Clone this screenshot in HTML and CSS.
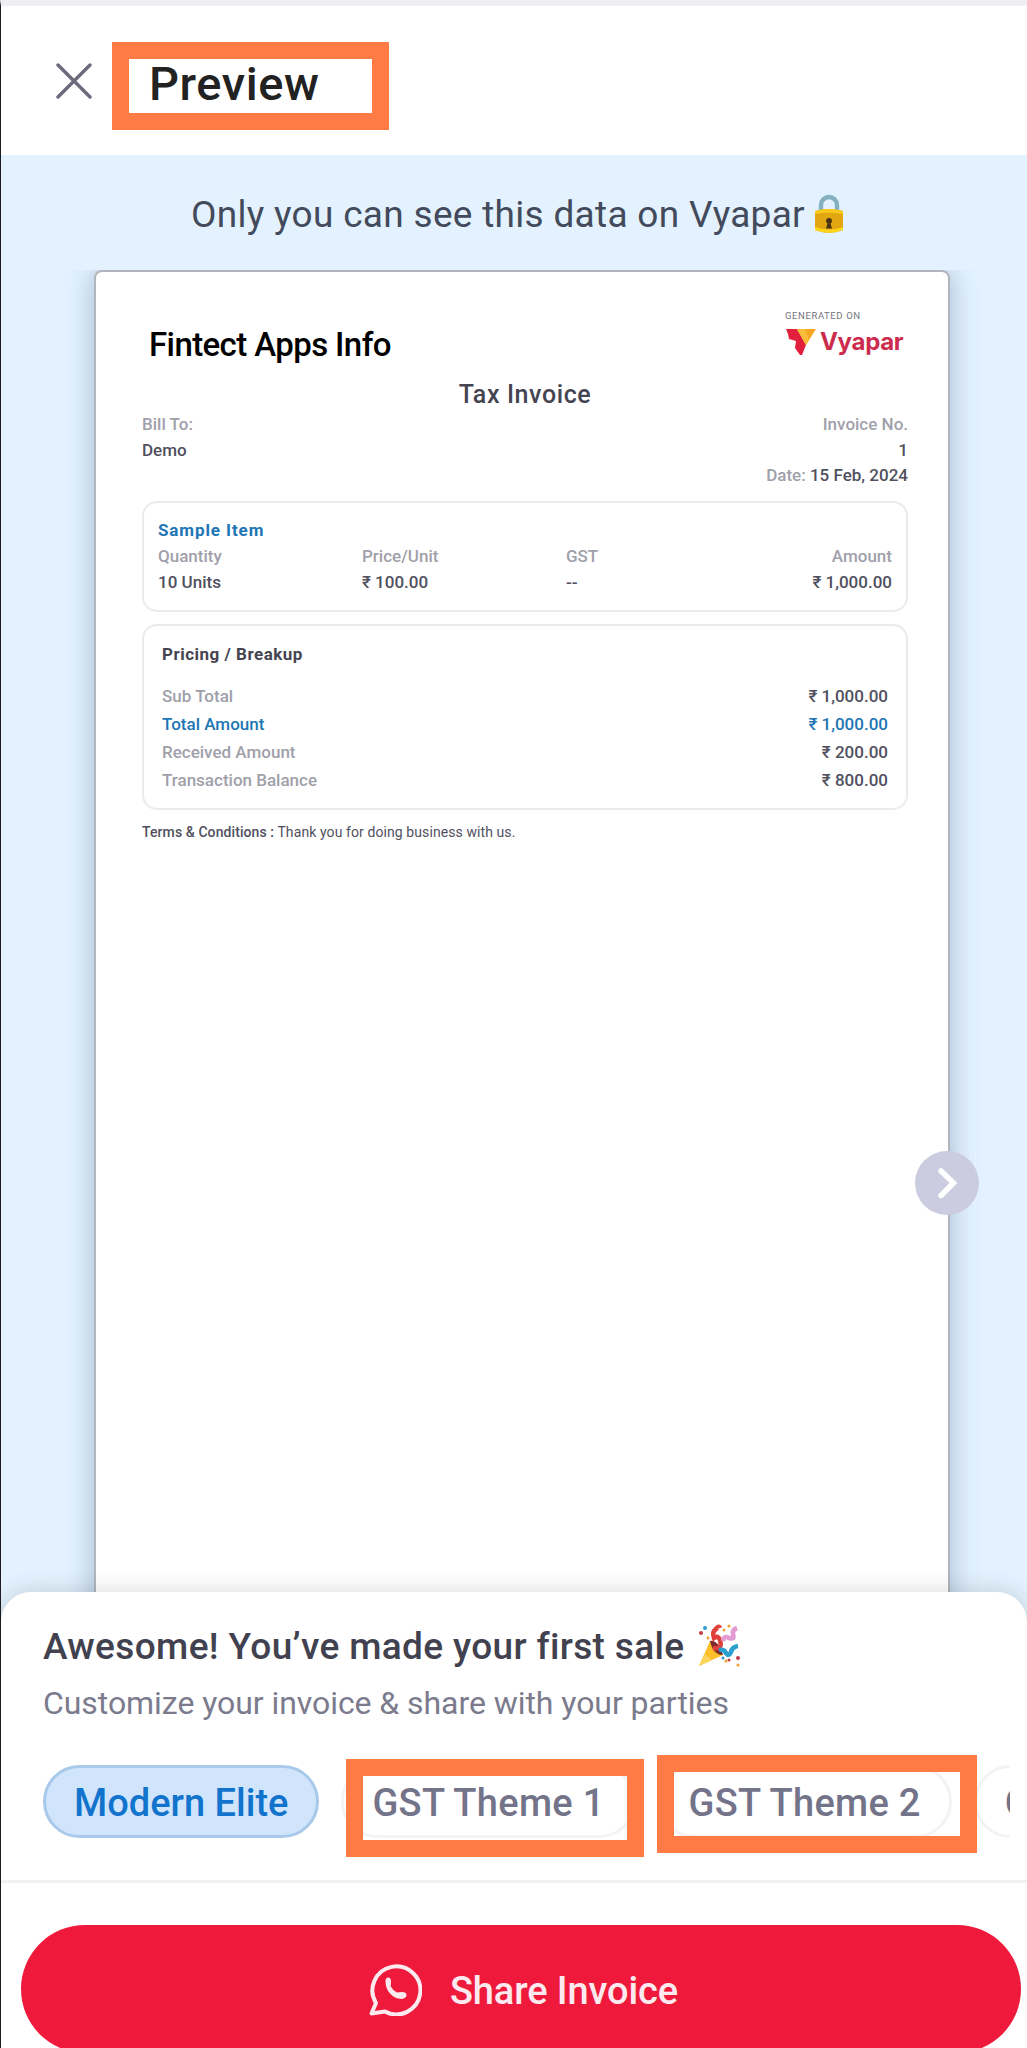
FILE: index.html
```html
<!doctype html>
<html lang="en">
<head>
    <meta charset="utf-8">
    <title>Preview</title>
    <link rel="stylesheet" href="styles.css">
</head>
<body>

<div class="screen">
    <header class="header">
        <svg class="close" viewBox="0 0 36 36">
            <path d="M2 2l32 32M34 2L2 34"/>
        </svg>
        <h1 class="title highlight">Preview</h1>
    </header>

    <main class="stage">
        <p class="notice">
            <span>Only you can see this data on Vyapar</span>
            <svg class="lock" viewBox="0 0 30 40">
                <path d="M7 20V11a8 8 0 0 1 16 0v9" fill="none" stroke="#84b1bf" stroke-width="4.4"/>
                <path d="M1 17q14-4 28 0v19q-14 6-28 0z" fill="#e2a610"/>
                <path d="M1 17q14-4 28 0v3q-14-3-28 0z" fill="#fbc91c"/>
                <path d="M1 33q14 5 28 0v3q-14 6-28 0z" fill="#fdd41c"/>
                <path d="M12 27a3 3 0 1 1 6 0q0 1.500-1.500 2.500l1.500 5h-6l1.500-5q-1.500-1-1.500-2.500z" fill="#4b3413"/>
            </svg>
        </p>

        <article class="invoice">
            <div class="brand">
                <h2 class="company">Fintect Apps Info</h2>
                <div class="generated">
                    <small>GENERATED ON</small>
                    <div class="logo">
                        <svg viewBox="0 0 31 28">
                            <path d="M0 1h11l9 16-4 10h-2l-5-7 1-7-7-2-1-5z" fill="#e0203c"/>
                            <path d="M11 1h19L20 17z" fill="#f6a723"/>
                            <path d="M11 1h8l4 11-3 5z" fill="#f9bd3a"/>
                        </svg>
                        <span>Vyapar</span>
                    </div>
                </div>
            </div>

            <h3 class="doc-title">Tax Invoice</h3>

            <div class="meta">
                <div>
                    <p class="muted">Bill To:</p>
                    <p>Demo</p>
                </div>
                <div class="right">
                    <p class="muted">Invoice No.</p>
                    <p>1</p>
                    <p><span class="muted">Date:</span> 15 Feb, 2024</p>
                </div>
            </div>

            <section class="box item">
                <h4 class="item-name">Sample Item</h4>
                <div class="item-grid">
                    <span class="muted">Quantity</span>
                    <span class="muted">Price/Unit</span>
                    <span class="muted">GST</span>
                    <span class="muted right">Amount</span>
                    <span>10 Units</span>
                    <span>₹ 100.00</span>
                    <span>--</span>
                    <span class="right">₹ 1,000.00</span>
                </div>
            </section>

            <section class="box pricing">
                <h4 class="pricing-title">Pricing / Breakup</h4>
                <div class="row"><span class="muted">Sub Total</span><span>₹ 1,000.00</span></div>
                <div class="row total"><span>Total Amount</span><span>₹ 1,000.00</span></div>
                <div class="row"><span class="muted">Received Amount</span><span>₹ 200.00</span></div>
                <div class="row"><span class="muted">Transaction Balance</span><span>₹ 800.00</span></div>
            </section>

            <p class="terms"><b>Terms &amp; Conditions :</b> Thank you for doing business with us.</p>
        </article>

        <div class="next">
            <svg viewBox="0 0 64 64">
                <path d="M26 20l12.500 12L26 44.500"/>
            </svg>
        </div>
    </main>

    <section class="sheet">
        <h2 class="sheet-title">
            <span>Awesome! You’ve made your first sale</span>
            <svg class="party" viewBox="0 0 42 44">
                <path d="M1 42L12 17q10 3 13 14z" fill="#fbbf2a"/>
                <path d="M1 42l6-12 7 6z" fill="#fdd45a"/>
                <path d="M12 17q8-2 13 14-10 0-13-14z" fill="#7e2a2c"/>
                <path d="M15 24q10 2 7-8-2-5-6-2-2-6 1-8 4-5 5-2" fill="none" stroke="#e0403c" stroke-width="4.600"/>
                <path d="M25 17q1-6 6-3 6 2 4-4-1-4 4-6" fill="none" stroke="#e29bd2" stroke-width="4.600"/>
                <path d="M21 26q5-1 7 3 3 4 5-1 1-5 7-6" fill="none" stroke="#2a9fd0" stroke-width="4.600"/>
                <g fill="#efa02f"><circle cx="10" cy="14" r="1.500"/><circle cx="26" cy="6" r="1.500"/><circle cx="31" cy="2" r="1.500"/><circle cx="28" cy="37" r="1.500"/><circle cx="40" cy="41" r="1.500"/></g>
                <g fill="#2d9ad6"><circle cx="7" cy="4" r="2"/><circle cx="25" cy="34" r="1.500"/></g>
                <g fill="#c33b46"><circle cx="3" cy="9" r="2"/><circle cx="31" cy="36" r="1.500"/><circle cx="40" cy="34" r="2"/></g>
            </svg>
        </h2>
        <p class="sheet-text">Customize your invoice &amp; share with your parties</p>

        <div class="themes">
            <div class="theme-list">
                <button class="theme active">Modern Elite</button>
                <button class="theme">GST Theme 1</button>
                <button class="theme">GST Theme 2</button>
                <button class="theme">GST Theme 3</button>
            </div>
            <div class="highlight mark-1"></div>
            <div class="highlight mark-2"></div>
        </div>

        <footer class="footer">
            <button class="share">
                <svg viewBox="0 0 53 53">
                    <path class="bubble" d="M7 40A24 24 0 1 1 16 48.500L2.500 50.500z"/>
                    <path class="phone" d="M16.500 18q0-3.500 3-3.500 2.500 0 2.500 4.500 0 3-.5 4 2 4 6.500 6.500 1.500-.5 5-.5 4.500 0 4.500 3t-5 4q-7-.5-11.500-5.500-4.500-5-4.500-12.500z"/>
                </svg>
                <span>Share Invoice</span>
            </button>
        </footer>
    </section>
</div>

</body>
</html>
```
FILE: styles.css
```css
* {
    box-sizing: border-box;
}

body {
    margin: 0;
    font-family: Roboto, "Liberation Sans", sans-serif;
    font-weight: 500;
    color: #50505e;
    background: #fff;
}

h1, h2, h3, h4, p {
    margin: 0;
    font-weight: 500;
    white-space: nowrap;
}

button {
    font: inherit;
    border: none;
    padding: 0;
    white-space: nowrap;
}

.screen {
    height: 2048px;
    overflow: hidden;
    border-left: 1px solid #1b1c21;
    border-top: 6px solid #efeff3;
}

.highlight {
    border: 17px solid #ff7b45;
}

.header {
    display: flex;
    align-items: flex-start;
    height: 149px;
    padding: 36px 0 0 55px;
}

.close {
    width: 36px;
    height: 36px;
    margin: 21px 20px 0 0;
    fill: none;
    stroke: #6c6a7c;
    stroke-width: 3.4;
    stroke-linecap: round;
}

.title {
    width: 277px;
    height: 88px;
    padding-left: 20px;
    font-size: 47px;
    line-height: 50px;
    letter-spacing: 0.6px;
    color: #222;
}

.stage {
    position: relative;
    height: 1467px;
    overflow: hidden;
    background: #e3f2fe;
}

.notice {
    display: flex;
    align-items: center;
    gap: 9px;
    height: 115px;
    padding: 3px 0 0 190px;
    font-size: 37px;
    font-weight: 400;
    letter-spacing: 0.3px;
    color: #424a5b;
}

.lock {
    width: 30px;
    height: 40px;
}

.invoice {
    height: 1400px;
    margin: 0 77px 0 93px;
    padding: 0 40px 0 46px;
    border: 2px solid #b1b5bd;
    border-radius: 8px;
    background: #fff;
    box-shadow: 0 0 28px rgba(70, 95, 140, 0.4);
    clip-path: inset(0 -40px);
    font-size: 17px;
    line-height: 25.5px;
}

.muted {
    color: #a0a0aa;
}

.right {
    text-align: right;
}

.brand {
    display: flex;
    justify-content: space-between;
    height: 108px;
    padding: 36px 3px 0 7px;
}

.company {
    padding-top: 17px;
    font-size: 33px;
    line-height: 40px;
    letter-spacing: -0.6px;
    color: #000;
}

.generated {
    width: 120px;
}

.generated small {
    display: block;
    font-size: 9.5px;
    font-weight: 400;
    line-height: 16px;
    letter-spacing: 0.6px;
    color: #75757f;
}

.logo {
    display: flex;
    align-items: center;
    height: 32px;
    padding: 3px 0 0 1px;
}

.logo svg {
    width: 31px;
    height: 28px;
    margin-right: 3px;
}

.logo span {
    font-family: Inter, sans-serif;
    font-size: 24px;
    font-weight: 700;
    letter-spacing: -0.3px;
    color: #cc2b4d;
}

.doc-title {
    height: 32px;
    font-size: 25px;
    line-height: 29px;
    text-align: center;
    letter-spacing: 0.6px;
    color: #454552;
}

.meta {
    display: flex;
    justify-content: space-between;
    height: 89px;
}

.box {
    border: 2px solid #ebebed;
    border-radius: 15px;
}

.item {
    height: 111px;
    margin-bottom: 12px;
    padding: 15px 14px;
}

.item-name {
    font-weight: 700;
    letter-spacing: 0.9px;
    color: #2076b5;
}

.item-grid {
    display: grid;
    grid-template-columns: 204px 204px 1fr 1fr;
    row-gap: 1px;
}

.pricing {
    height: 186px;
    padding: 16px 18px;
}

.pricing-title {
    margin-bottom: 14px;
    font-weight: 700;
    letter-spacing: 0.5px;
    color: #454552;
}

.row {
    display: flex;
    justify-content: space-between;
    line-height: 28px;
}

.total {
    color: #2076b5;
}

.terms {
    margin-top: 10px;
    font-size: 14px;
    font-weight: 400;
    letter-spacing: 0.09px;
}

.terms b {
    font-weight: 500;
}

.next {
    position: absolute;
    right: 48px;
    top: 996px;
    width: 64px;
    height: 64px;
    border-radius: 50%;
    background: #cccce0;
}

.next svg {
    display: block;
    fill: none;
    stroke: #fff;
    stroke-width: 5.5;
    stroke-linecap: round;
}

.sheet {
    position: relative;
    height: 500px;
    margin-top: -30px;
    padding-top: 41px;
    border-radius: 30px 30px 0 0;
    background: #fff;
    box-shadow: 0 0 24px rgba(0, 0, 0, 0.16);
}

.sheet-title {
    display: flex;
    align-items: center;
    gap: 14px;
    height: 26px;
    padding-left: 42px;
    font-size: 37px;
    letter-spacing: 0.36px;
    color: #41414f;
}

.party {
    width: 42px;
    height: 44px;
}

.sheet-text {
    margin-top: 22px;
    padding-left: 42px;
    font-size: 32px;
    font-weight: 400;
    line-height: 44px;
    letter-spacing: -0.06px;
    color: #7b7b8d;
}

.themes {
    position: relative;
    height: 158px;
    padding: 40px 17px 0 42px;
    border-bottom: 3px solid #f2f2f2;
}

.theme-list {
    display: flex;
    gap: 22px;
    overflow: hidden;
}

.theme {
    flex: none;
    height: 73px;
    padding: 3px 28px 0;
    border: 3px solid #f3f3f6;
    border-radius: 37px;
    background: #fff;
    font-size: 38px;
    letter-spacing: 0.3px;
    color: #73738a;
}

.theme.active {
    border-color: #a9c9ea;
    background: #d0e5fc;
    letter-spacing: 0;
    color: #1273cc;
}

.mark-1,
.mark-2 {
    position: absolute;
    height: 98px;
}

.mark-1 {
    left: 345px;
    top: 34px;
    width: 298px;
}

.mark-2 {
    left: 656px;
    top: 30px;
    width: 320px;
}

.footer {
    padding: 42px 6px 0 20px;
}

.share {
    display: flex;
    align-items: center;
    justify-content: center;
    gap: 28px;
    width: 100%;
    height: 128px;
    padding: 1px 0 0 5px;
    border-radius: 64px;
    background: #ef1a3b;
    font-size: 38px;
    letter-spacing: -0.1px;
    color: #fdeaf0;
}

.share svg {
    width: 53px;
    height: 53px;
}

.share span {
    padding-top: 3px;
}

.bubble {
    fill: none;
    stroke: #fdeaf0;
    stroke-width: 4;
    stroke-linejoin: round;
}

.phone {
    fill: #fdeaf0;
}
```
